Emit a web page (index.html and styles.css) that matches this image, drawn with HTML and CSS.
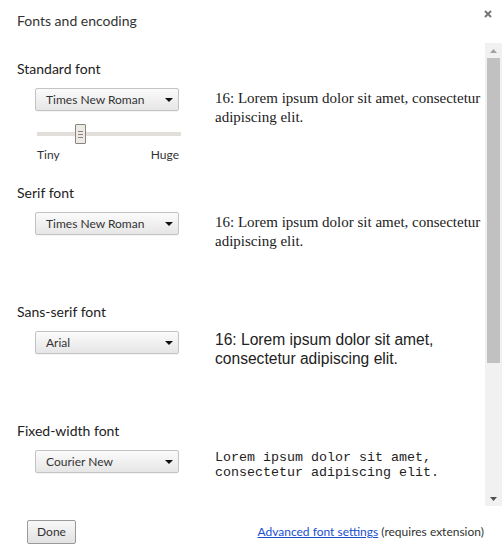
FILE: index.html
```html
<!DOCTYPE html>
<html>
<head>
<meta charset="utf-8">
<link rel="stylesheet" href="styles.css">
</head>
<body>
<div class="dialog">
  <div class="header">
    <h1 class="title">Fonts and encoding</h1>
    <svg class="close" width="8" height="8" viewBox="0 0 8 8"><path d="M1 1L7 7M7 1L1 7" stroke="#777" stroke-width="2"/></svg>
  </div>
  <div class="body">
    <div class="content">
      <section class="section">
        <h3 class="label">Standard font</h3>
        <div class="row">
          <div class="controls">
            <div class="select"><span>Times New Roman</span><svg class="arrow" width="8" height="4" viewBox="0 0 8 4"><path d="M0 0H8L4 4Z" fill="#111"/></svg></div>
            <div class="slider">
              <div class="track"></div>
              <div class="thumb"><i></i><i></i><i></i></div>
            </div>
            <div class="slider-labels"><span>Tiny</span><span>Huge</span></div>
          </div>
          <div class="sample serif">16: Lorem ipsum dolor sit amet, consectetur adipiscing elit.</div>
        </div>
      </section>
      <section class="section">
        <h3 class="label">Serif font</h3>
        <div class="row">
          <div class="controls">
            <div class="select"><span>Times New Roman</span><svg class="arrow" width="8" height="4" viewBox="0 0 8 4"><path d="M0 0H8L4 4Z" fill="#111"/></svg></div>
          </div>
          <div class="sample serif">16: Lorem ipsum dolor sit amet, consectetur adipiscing elit.</div>
        </div>
      </section>
      <section class="section">
        <h3 class="label">Sans-serif font</h3>
        <div class="row">
          <div class="controls">
            <div class="select"><span>Arial</span><svg class="arrow" width="8" height="4" viewBox="0 0 8 4"><path d="M0 0H8L4 4Z" fill="#111"/></svg></div>
          </div>
          <div class="sample sans">16: Lorem ipsum dolor sit amet, consectetur adipiscing elit.</div>
        </div>
      </section>
      <section class="section">
        <h3 class="label">Fixed-width font</h3>
        <div class="row">
          <div class="controls">
            <div class="select"><span>Courier New</span><svg class="arrow" width="8" height="4" viewBox="0 0 8 4"><path d="M0 0H8L4 4Z" fill="#111"/></svg></div>
          </div>
          <div class="sample mono">Lorem ipsum dolor sit amet, consectetur adipiscing elit.</div>
        </div>
      </section>
    </div>
    <div class="scrollbar">
      <div class="sb-btn"><svg width="7" height="4" viewBox="0 0 7 4"><path d="M0 4H7L3.5 0Z" fill="#a3a3a3"/></svg></div>
      <div class="sb-track"><div class="sb-thumb"></div></div>
      <div class="sb-btn"><svg width="7" height="4" viewBox="0 0 7 4"><path d="M0 0H7L3.5 4Z" fill="#505050"/></svg></div>
    </div>
  </div>
  <div class="footer">
    <button class="btn">Done</button>
    <div class="advanced"><a href="#" class="link">Advanced font settings</a> (requires extension)</div>
  </div>
</div>
</body>
</html>
```
FILE: styles.css
```css
* { box-sizing: border-box; }
html, body { margin: 0; padding: 0; background: #fff; }
body { font-family: Lato, "Noto Sans", sans-serif; color: #222; }
.dialog { width: 502px; height: 558px; display: flex; flex-direction: column; background: #fff; }
.header { height: 43px; display: flex; justify-content: space-between; align-items: flex-start; padding: 0 10px 0 17px; }
.title { margin: 12px 0 0; font-size: 14px; font-weight: normal; line-height: 17px; color: #333; }
.close { margin-top: 10px; }
.body { height: 463px; display: flex; overflow: hidden; }
.content { flex: 1; padding: 17px 0 0 17px; overflow: hidden; }
.section { padding-bottom: 21px; }
.label { margin: 0 0 11px; font-size: 14px; font-weight: normal; line-height: 17px; color: #222; }
.row { display: flex; align-items: flex-start; padding-left: 18px; min-height: 70px; }
.controls { width: 144px; flex-shrink: 0; }
.select { height: 23px; display: flex; align-items: center; justify-content: space-between; padding: 0 5px 0 10px; border: 1px solid #c3c3c3; border-radius: 2px; background: linear-gradient(#fbfbfb, #e6e6e6); box-shadow: 0 1px 0 rgba(0,0,0,0.04); font-size: 12px; color: #333; }
.arrow { display: block; }
.slider { position: relative; height: 20px; margin: 13px 0 0 2px; width: 144px; }
.track { position: absolute; left: 0; right: 0; top: 8px; height: 4px; background: #e2dfda; }
.thumb { position: absolute; left: 38px; top: 0; width: 11px; height: 20px; border: 1px solid #8a8580; border-radius: 1px; background: #ede9e5; display: flex; flex-direction: column; align-items: center; justify-content: center; gap: 2px; }
.thumb i { display: block; width: 5px; height: 1px; background: #8a8580; }
.slider-labels { display: flex; justify-content: space-between; margin: 3px 0 0 2px; font-size: 12px; line-height: 16px; color: #333; }
.sample { margin-left: 36px; width: 270px; color: #222; }
.serif { font-family: "Liberation Serif", serif; font-size: 15px; line-height: 18.5px; padding-top: 1px; }
.sans { font-family: "Liberation Sans", sans-serif; font-size: 15.6px; line-height: 18.5px; }
.mono { font-family: "Liberation Mono", monospace; font-size: 13.333px; }
.scrollbar { width: 17px; flex-shrink: 0; background: #f1f1f1; display: flex; flex-direction: column; }
.sb-btn { height: 15px; display: flex; align-items: center; justify-content: center; }
.sb-track { flex: 1; padding: 0 2px; }
.sb-thumb { height: 305px; background: #c1c1c1; }
.footer { flex: 1; display: flex; justify-content: space-between; align-items: center; padding: 0 17px 0 27px; margin-top: -1px; }
.btn { width: 49px; height: 24px; padding: 0; border: 1px solid #9a9a9a; border-radius: 2px; background: linear-gradient(#f8f8f8, #e2e2e2); font-family: Lato, "Noto Sans", sans-serif; font-size: 12px; color: #333; }
.advanced { font-size: 12px; color: #333; margin-right: 1px; }
.link { color: #1a4fcf; text-decoration: underline; }
```
